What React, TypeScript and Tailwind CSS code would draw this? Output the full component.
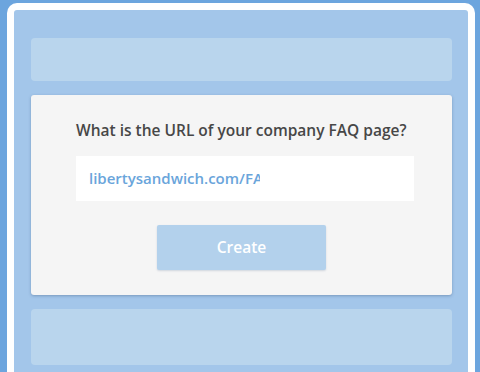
import React from 'react';

const App: React.FC = () => {
  return (
    <div
      className="w-[480px] h-[372px] overflow-hidden bg-[#6ca5de] pl-[7px] pr-[5px] pt-[3px]"
      style={{ fontFamily: '"Open Sans", "Noto Sans", sans-serif' }}
    >
      <div className="h-[400px] rounded-[10px] bg-white p-[7px]">
        <div className="flex h-full flex-col gap-[14px] rounded-[3px] bg-[#a3c6ea] pl-[17px] pr-[16px] pt-[28px]">
          <div className="h-[43px] rounded-[4px] bg-[#b9d5ed]" />
          <div className="flex h-[200px] flex-col rounded-[3px] bg-[#f5f5f5] pl-[45px] pr-[38px] pt-[24px] shadow-[0_1px_3px_rgba(40,70,110,0.35)]">
            <p className="text-[15.5px] font-semibold leading-[22px] text-[#474747]">
              What is the URL of your company FAQ page?
            </p>
            <div className="mt-[15px] flex h-[45px] items-center bg-white pl-[13px]">
              <span className="w-[171px] overflow-hidden whitespace-nowrap text-[15px] font-semibold text-[#6aa5db]">
                libertysandwich.com/FAQ
              </span>
            </div>
            <div className="mt-[24px] flex justify-center pr-[7px]">
              <button className="h-[45px] w-[169px] rounded-[2px] bg-[#b3d1ec] text-[15.5px] font-semibold text-white shadow-[0_1px_2px_rgba(60,90,130,0.2)]">
                Create
              </button>
            </div>
          </div>
          <div className="h-[56px] rounded-[4px] bg-[#b9d5ed]" />
        </div>
      </div>
    </div>
  );
};

export default App;
